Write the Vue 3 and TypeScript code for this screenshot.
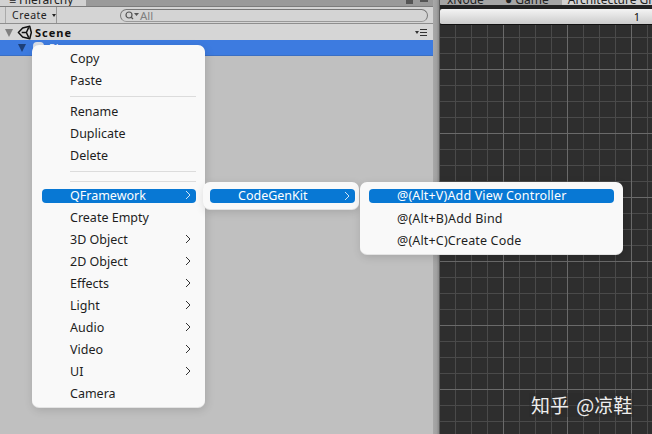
<template>
  <div class="screen">
    <section class="hierarchy">
      <div class="tabs">
        <div class="tab">≡ Hierarchy</div>
        <div class="tab-fill">
          <span class="win-btn" />
          <span class="win-line" />
        </div>
      </div>
      <div class="toolbar">
        <div class="create">Create <i class="caret" /></div>
        <div class="search">
          <svg class="glass" viewBox="0 0 16 10" width="16" height="10" fill="none" stroke="#555" stroke-width="1.2">
            <circle cx="5" cy="5" r="3" />
            <path d="M7 7l2 2" />
            <path d="M10 3h5l-2.5 3z" fill="#555" stroke="none" />
          </svg>
          <span>All</span>
        </div>
      </div>
      <div class="scene-row">
        <i class="tri" />
        <svg class="unity" viewBox="0 0 16 16" width="15" height="15" fill="none" stroke="#111" stroke-width="1.6" stroke-linejoin="round">
          <path d="M1.5 8 6 3.2 13.6 1.3 15.3 8 13.6 14.7 6 12.8Z" />
          <path d="M5 8H10L12.5 2.6M10 8 12.5 13.4" />
        </svg>
        <b>Scene</b>
        <span class="spacer" />
        <i class="caret small" />
        <span class="burger" />
      </div>
      <div class="selected-row">
        <i class="tri dark" />
        <span class="cube" />
        <span class="obj-name">Pl</span>
      </div>
    </section>

    <div class="divider" />

    <section class="graph">
      <div class="graph-tabs">
        <span class="g-tab node">xNode</span>
        <span class="g-tab game">● Game</span>
        <span class="g-tab active">Architecture Gr</span>
      </div>
      <div class="graph-head">1</div>
      <div class="graph-grid" />
    </section>

    <div class="menu main">
      <template v-for="(item, i) in mainItems" :key="i">
        <div v-if="item.sep" class="sep" :class="item.kind" />
        <div v-else class="item" :class="{ on: item.on }">
          <span>{{ item.label }}</span>
          <svg v-if="item.sub" class="chev" viewBox="0 0 6 10" width="6" height="10" fill="none" stroke="currentColor" stroke-width="1">
            <path d="M1 1l4 4-4 4" />
          </svg>
        </div>
      </template>
    </div>

    <div class="menu second">
      <div class="item on">
        <span>CodeGenKit</span>
        <svg class="chev" viewBox="0 0 6 10" width="6" height="10" fill="none" stroke="currentColor" stroke-width="1">
          <path d="M1 1l4 4-4 4" />
        </svg>
      </div>
    </div>

    <div class="menu third">
      <div v-for="(label, i) in codeItems" :key="label" class="item" :class="{ on: i === 0 }">
        <span>{{ label }}</span>
      </div>
    </div>

    <div class="mark">知乎 @凉鞋</div>
  </div>
</template>

<script setup lang="ts">
interface MenuRow {
  label?: string
  sub?: boolean
  on?: boolean
  sep?: boolean
  kind?: string
}

const mainItems: MenuRow[] = [
  { label: 'Copy' },
  { label: 'Paste' },
  { sep: true },
  { label: 'Rename' },
  { label: 'Duplicate' },
  { label: 'Delete' },
  { sep: true },
  { sep: true, kind: 'last' },
  { label: 'QFramework', sub: true, on: true },
  { label: 'Create Empty' },
  { label: '3D Object', sub: true },
  { label: '2D Object', sub: true },
  { label: 'Effects', sub: true },
  { label: 'Light', sub: true },
  { label: 'Audio', sub: true },
  { label: 'Video', sub: true },
  { label: 'UI', sub: true },
  { label: 'Camera' },
]

const codeItems = ['@(Alt+V)Add View Controller', '@(Alt+B)Add Bind', '@(Alt+C)Create Code']
</script>

<style>
html, body {
  margin: 0;
  background: #282828;
}
</style>

<style scoped>
.screen {
  position: relative;
  width: 652px;
  height: 434px;
  overflow: hidden;
  display: flex;
  font-family: "Noto Sans", "Open Sans", sans-serif;
  background: #c0c0c0;
}

.hierarchy {
  width: 433px;
  flex-shrink: 0;
  display: flex;
  flex-direction: column;
  background: #c0c0c0;
}

.tabs {
  height: 6px;
  display: flex;
  background: #9a9a9a;
  overflow: hidden;
}
.tab {
  width: 86px;
  height: 6px;
  line-height: 0;
  font-size: 12px;
  color: #222;
  background: #d2d2d2;
  padding-left: 9px;
  box-sizing: border-box;
  white-space: nowrap;
}
.tab-fill {
  flex: 1;
  display: flex;
  justify-content: flex-end;
  gap: 7px;
  padding-right: 5px;
}
.win-btn {
  width: 7px;
  height: 4px;
  background: #555;
}
.win-line {
  width: 8px;
  height: 2px;
  background: #555;
}

.toolbar {
  height: 16px;
  display: flex;
  align-items: center;
  background: #d4d4d4;
  border-top: 1px solid #7c7c7c;
  border-bottom: 1px solid #8e8e8e;
  padding-right: 5px;
}
.create {
  width: 52px;
  margin-left: 5px;
  height: 16px;
  box-sizing: border-box;
  padding-left: 6px;
  display: flex;
  align-items: center;
  gap: 5px;
  font-size: 10.5px;
  letter-spacing: 0.5px;
  color: #222;
  border-left: 1px solid #aaa;
  border-right: 1px solid #999;
}
.caret {
  width: 0;
  height: 0;
  border-left: 2.5px solid transparent;
  border-right: 2.5px solid transparent;
  border-top: 3px solid #222;
}
.search {
  margin-left: 63px;
  flex: 1;
  height: 13px;
  box-sizing: border-box;
  display: flex;
  align-items: center;
  padding-left: 3px;
  border: 1px solid #777;
  border-bottom-color: #999;
  border-radius: 7px;
  font-size: 11.5px;
  color: #808080;
  gap: 0;
}

.scene-row {
  height: 15px;
  padding-top: 1px;
  display: flex;
  align-items: center;
  background: #d6d6d6;
  font-size: 11px;
  color: #111;
  letter-spacing: 1px;
  padding-right: 6px;
}
.scene-row b {
  margin-left: 3px;
}
.tri {
  width: 0;
  height: 0;
  margin-left: 5px;
  margin-right: 4px;
  border-left: 4px solid transparent;
  border-right: 4px solid transparent;
  border-top: 8px solid #808080;
}
.spacer {
  flex: 1;
}
.caret.small {
  border-top-color: #333;
  margin-right: 1px;
}
.burger {
  width: 7px;
  height: 5px;
  border-top: 1px solid #333;
  border-bottom: 1px solid #333;
  background: linear-gradient(#333, #333) center / 100% 1px no-repeat;
}

.selected-row {
  height: 16px;
  display: flex;
  align-items: center;
  background: #3d7be0;
  border-bottom: 1px solid #3a6fc4;
  box-sizing: border-box;
}
.tri.dark {
  margin-left: 18px;
  margin-right: 7px;
  border-top-color: #1d3f78;
}
.cube {
  width: 11px;
  height: 11px;
  border-radius: 4px;
  background: #d9dee6;
}
.obj-name {
  margin-left: 5px;
  font-size: 11px;
  color: #fff;
}

.divider {
  width: 7px;
  flex-shrink: 0;
  background: linear-gradient(90deg, #a8a8a8, #a0a0a0 50%, #8a8a8a 85%, #333);
}

.graph {
  flex: 1;
  display: flex;
  flex-direction: column;
  background: #222;
  min-width: 0;
}
.graph-tabs {
  height: 5px;
  display: flex;
  background: #a5a5a5;
  overflow: hidden;
  font-size: 12px;
  line-height: 0;
  color: #222;
  white-space: nowrap;
}
.g-tab.node {
  margin-left: 7px;
}
.g-tab.game {
  margin-left: 21px;
}
.g-tab.active {
  margin-left: 13px;
  padding-left: 6px;
  background: #d2d2d2;
  flex: 1;
}
.graph-head {
  height: 15px;
  margin-top: 4px;
  border-radius: 2px 0 0 2px;
  border-bottom: 1px solid #111;
  background: linear-gradient(#f4f4f4, #cccccc);
  text-align: right;
  padding-right: 12px;
  font-size: 11px;
  line-height: 15px;
  color: #111;
}
.graph-grid {
  flex: 1;
  background-color: #2e2e2e;
  background-image:
    linear-gradient(90deg, #6a6a6a 1px, transparent 1px),
    linear-gradient(#6a6a6a 1px, transparent 1px),
    linear-gradient(90deg, #4a4a4a 1px, transparent 1px),
    linear-gradient(#4a4a4a 1px, transparent 1px);
  background-size: 64px 64px, 64px 64px, 16px 16px, 16px 16px;
  background-position: 63px 0, 0 44px, 15px 0, 0 12px;
}

.menu {
  position: absolute;
  box-sizing: border-box;
  background: #f9f9f9;
  border-radius: 7px;
  box-shadow: 0 1px 0 #e4e4e4, 1px 3px 10px rgba(0, 0, 0, 0.14);
  font-size: 12.5px;
  color: #1e1e1e;
}
.main {
  left: 32px;
  top: 45px;
  width: 173px;
  height: 362px;
  padding: 2px 9px 0 10px;
}
.second {
  left: 203px;
  top: 182px;
  width: 156px;
  height: 27px;
  padding: 0 4px 0 7px;
}
.third {
  left: 360px;
  top: 182px;
  width: 263px;
  height: 72px;
  padding: 0 9px;
  letter-spacing: 0.16px;
}

.item {
  height: 22px;
  display: flex;
  align-items: center;
  justify-content: space-between;
  padding: 0 5px 0 28px;
  color: #1e1e1e;
  position: relative;
  z-index: 0;
}
.item.on {
  color: #fff;
}
.item.on::before {
  content: "";
  position: absolute;
  z-index: -1;
  left: 0;
  right: 0;
  top: 5px;
  bottom: 3px;
  background: #0878d4;
  border-radius: 4px;
}
.second .item {
  height: 27px;
}
.second .item.on::before {
  top: 7px;
  bottom: 6px;
}
.third .item.on::before {
  top: 7px;
  bottom: 4px;
}
.third .item:first-child {
  height: 25px;
  padding-top: 2px;
  box-sizing: border-box;
}
.chev {
  color: #333;
}
.on .chev {
  color: #cfe4f6;
}

.sep {
  height: 1px;
  background: #dcdcdc;
  margin: 5px 0 3px 28px;
}
.sep.last {
  margin: 9px 0 2px 28px;
}

.mark {
  position: absolute;
  left: 529px;
  top: 393px;
  font-family: "Noto Sans CJK SC", sans-serif;
  font-size: 19px;
  line-height: 24px;
  word-spacing: 3px;
  color: #eeeeee;
  white-space: nowrap;
  background: rgba(40, 40, 40, 0.35);
  padding: 0 2px;
}
</style>
